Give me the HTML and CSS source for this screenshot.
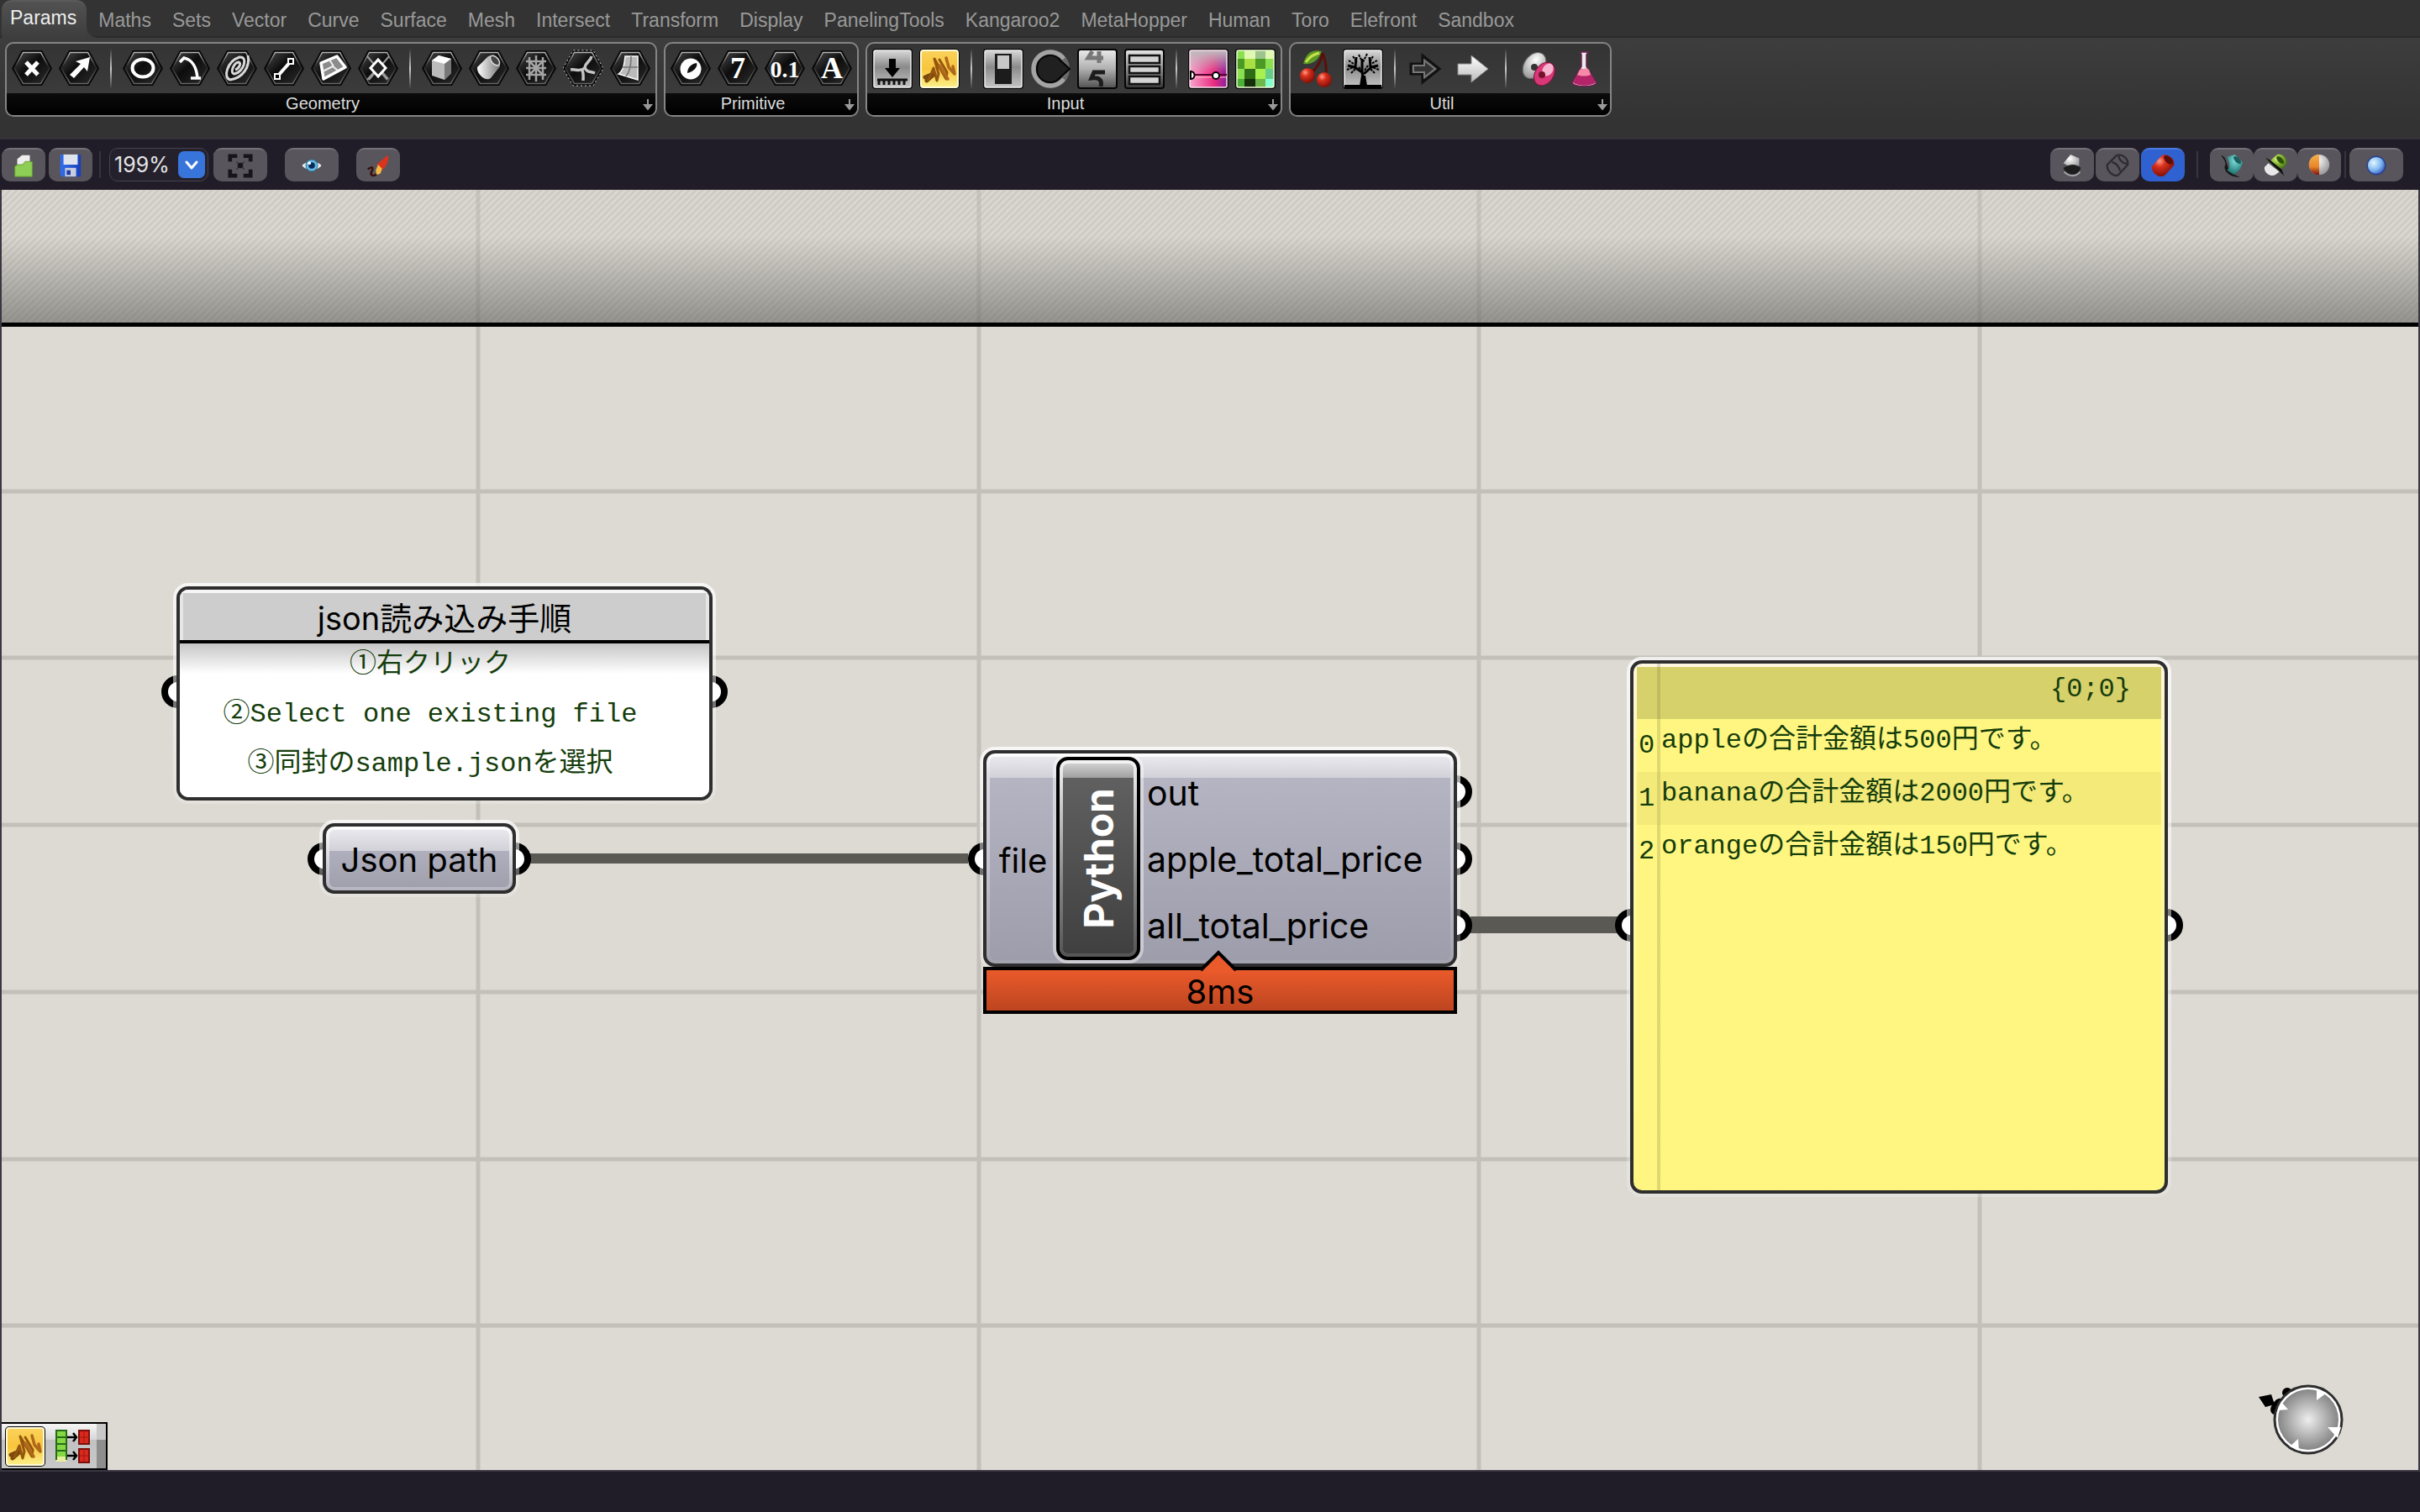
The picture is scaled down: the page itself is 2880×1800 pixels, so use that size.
FILE: index.html
```html
<!DOCTYPE html>
<html lang="ja">
<head>
    <meta charset="UTF-8">
    <meta name="viewport" content="width=device-width, initial-scale=1.0">
    <title>Grasshopper</title>
    <link rel="stylesheet" href="styles.css">
</head>
<body>

    <!-- shared shapes and gradients -->
    <svg class="defs" aria-hidden="true">
        <defs>
            <linearGradient id="gDark" x1="0" y1="0" x2="1" y2="1">
                <stop offset="0" stop-color="#4a4a4a"/><stop offset=".45" stop-color="#0c0c0c"/><stop offset="1" stop-color="#2c2c2c"/>
            </linearGradient>
            <linearGradient id="gEdge" x1="0" y1="0" x2="0" y2="1">
                <stop offset="0" stop-color="#b5b5b5"/><stop offset=".45" stop-color="#2a2a2a"/><stop offset="1" stop-color="#666"/>
            </linearGradient>
            <linearGradient id="gSteel" x1="0" y1="0" x2="0" y2="1">
                <stop offset="0" stop-color="#d8d8d8"/><stop offset=".45" stop-color="#8a8a8a"/><stop offset="1" stop-color="#c4c4c4"/>
            </linearGradient>
            <linearGradient id="gFade" x1="0" y1="0" x2="0" y2="1">
                <stop offset="0" stop-color="#e4e4e4"/><stop offset="1" stop-color="#3c3c3c"/>
            </linearGradient>
            <linearGradient id="gDrum" x1="0" y1="0" x2="0" y2="1">
                <stop offset="0" stop-color="#e8e8e8"/><stop offset=".5" stop-color="#b0b0b0"/><stop offset="1" stop-color="#555"/>
            </linearGradient>
            <linearGradient id="gGold" x1="0" y1="0" x2="0" y2="1">
                <stop offset="0" stop-color="#fbd25c"/><stop offset=".5" stop-color="#f8c53c"/><stop offset="1" stop-color="#fdf08a"/>
            </linearGradient>
            <linearGradient id="gPink" x1="0" y1="0" x2="1" y2="0">
                <stop offset="0" stop-color="#f7a3cc"/><stop offset=".65" stop-color="#ea2d80"/><stop offset="1" stop-color="#8a1f9c"/>
            </linearGradient>
            <linearGradient id="gGray" x1="0" y1="0" x2="0" y2="1">
                <stop offset="0" stop-color="#bdbdbd"/><stop offset="1" stop-color="#bdbdbd" stop-opacity="0"/>
            </linearGradient>
            <linearGradient id="gSolid" x1="0" y1="0" x2="1" y2="0">
                <stop offset="0" stop-color="#fff"/><stop offset="1" stop-color="#777"/>
            </linearGradient>
            <linearGradient id="gArrow" x1="0" y1="0" x2="0" y2="1">
                <stop offset="0" stop-color="#fff"/><stop offset="1" stop-color="#bbb"/>
            </linearGradient>
            <linearGradient id="gOrange" x1="0" y1="0" x2="0" y2="1">
                <stop offset="0" stop-color="#f5b04a"/><stop offset=".6" stop-color="#e8862a"/><stop offset="1" stop-color="#7c1008"/>
            </linearGradient>
            <linearGradient id="gDisk" x1="0" y1="0" x2="1" y2="0">
                <stop offset="0" stop-color="#2f6df0"/><stop offset="1" stop-color="#1a3fb8"/>
            </linearGradient>
            <radialGradient id="gRed" cx=".35" cy=".3" r=".75">
                <stop offset="0" stop-color="#ff9a86"/><stop offset=".35" stop-color="#d8301c"/><stop offset="1" stop-color="#7a0d06"/>
            </radialGradient>
            <radialGradient id="gTeal" cx=".5" cy=".3" r=".8">
                <stop offset="0" stop-color="#7fe0dc"/><stop offset=".6" stop-color="#36928f"/><stop offset="1" stop-color="#1a5554"/>
            </radialGradient>
            <radialGradient id="gGreen" cx=".4" cy=".3" r=".8">
                <stop offset="0" stop-color="#d6f07c"/><stop offset=".5" stop-color="#77a829"/><stop offset="1" stop-color="#31580a"/>
            </radialGradient>
            <radialGradient id="gBlue" cx=".35" cy=".35" r=".75">
                <stop offset="0" stop-color="#e4f6ff"/><stop offset=".55" stop-color="#80b8f0"/><stop offset="1" stop-color="#2a46b0"/>
            </radialGradient>
            <radialGradient id="gWhite" cx=".4" cy=".3" r=".8">
                <stop offset="0" stop-color="#fff"/><stop offset="1" stop-color="#8a8a8a"/>
            </radialGradient>
            <radialGradient id="gDial">
                <stop offset="0" stop-color="#eee"/><stop offset="1" stop-color="#868686"/>
            </radialGradient>
            <symbol id="hex" viewBox="0 0 48 48">
                <path d="M0 23.500 12 2h24l12 21.500L36 44H12z" fill="#060606"/>
                <path d="M3 23.500 13.500 4.500h21L45 23.500 34.500 41.500h-21z" fill="url(#gDark)" stroke="url(#gEdge)" stroke-width="1.500"/>
            </symbol>
            <symbol id="tile" viewBox="0 0 48 48">
                <rect x="0" y="0" width="48" height="48" rx="4" fill="#050505"/>
                <rect x="2" y="2" width="44" height="44" rx="2" fill="url(#gSteel)" stroke="#eee" stroke-width="1.500"/>
            </symbol>
            <symbol id="scribble" viewBox="0 0 48 48">
                <rect x="0" y="0" width="48" height="48" rx="5" fill="#050505"/>
                <rect x="2" y="2" width="44" height="44" rx="3" fill="url(#gGold)" stroke="#fffbd8" stroke-width="2"/>
                <path d="M7 34l7-3-5 7 9-8" fill="none" stroke="#7c4a0c" stroke-width="5" stroke-linecap="round" stroke-linejoin="round"/>
                <path d="M11 37l6-14 4 15 2-8-5-18 14 24 1-8-9-15" fill="none" stroke="#94560f" stroke-width="3" stroke-linecap="round" stroke-linejoin="round"/>
                <path d="M24 20l10 16M32 11l3 11 7 8-2-9" fill="none" stroke="#b0681c" stroke-width="3.500" stroke-linecap="round" stroke-linejoin="round"/>
            </symbol>
        </defs>
    </svg>

    <header class="ribbon">
        <nav class="tabs">
            <button class="tab active">Params</button>
            <button class="tab">Maths</button>
            <button class="tab">Sets</button>
            <button class="tab">Vector</button>
            <button class="tab">Curve</button>
            <button class="tab">Surface</button>
            <button class="tab">Mesh</button>
            <button class="tab">Intersect</button>
            <button class="tab">Transform</button>
            <button class="tab">Display</button>
            <button class="tab">PanelingTools</button>
            <button class="tab">Kangaroo2</button>
            <button class="tab">MetaHopper</button>
            <button class="tab">Human</button>
            <button class="tab">Toro</button>
            <button class="tab">Elefront</button>
            <button class="tab">Sandbox</button>
        </nav>

        <div class="groups">
            <section class="group">
                <div class="icons">
                    <button class="icon" aria-label="Point"><svg viewBox="0 0 48 48"><use href="#hex"/><path d="M17 16l14 15M31 16L17 31" stroke="#fff" stroke-width="5"/></svg></button>
                    <button class="icon" aria-label="Vector"><svg viewBox="0 0 48 48"><use href="#hex"/><path d="M13 31l13-13-6-3 17-5-3 17-4-5-12 13z" fill="#fff"/></svg></button>
                    <span class="sep"></span>
                    <button class="icon" aria-label="Circle"><svg viewBox="0 0 48 48"><use href="#hex"/><ellipse cx="24" cy="23" rx="12.500" ry="10.500" fill="none" stroke="#fff" stroke-width="4"/></svg></button>
                    <button class="icon" aria-label="Arc"><svg viewBox="0 0 48 48"><use href="#hex"/><path d="M12 16l5-5c10 2 15 12 16 24M25 35h12" fill="none" stroke="#fff" stroke-width="3.500"/></svg></button>
                    <button class="icon" aria-label="Curve"><svg viewBox="0 0 48 48"><use href="#hex"/><path d="M37 8c3 13-6 27-21 29-9-2-4-22 11-27 11-1 5 18-6 20-6-1-1-13 5-14 4 1 0 8-4 9" fill="none" stroke="#d8d8d8" stroke-width="3"/></svg></button>
                    <button class="icon" aria-label="Line"><svg viewBox="0 0 48 48"><use href="#hex"/><path d="M17 32L32 15" stroke="#fff" stroke-width="4"/><path d="M13 30h6v6h-6zM29 12h6v6h-6z" fill="#000" stroke="#fff" stroke-width="2"/></svg></button>
                    <button class="icon" aria-label="Plane"><svg viewBox="0 0 48 48"><use href="#hex"/><path d="M12 17l19-8 10 13-26 14z" fill="#8c8c8c" stroke="#fff" stroke-width="3.500" stroke-linejoin="round"/><path d="M14 27l12-6 6 5M22 13l5 8" fill="none" stroke="#eee" stroke-width="2"/></svg></button>
                    <button class="icon" aria-label="Rectangle"><svg viewBox="0 0 48 48"><use href="#hex"/><path d="M11 9l24 28M37 9L13 37M11 37l8-9M36 36l-7-8" stroke="#999" stroke-width="2"/><path d="M24 13l9 10-9 10-9-10z" fill="#222" stroke="#fff" stroke-width="3"/></svg></button>
                    <span class="sep"></span>
                    <button class="icon" aria-label="Box"><svg viewBox="0 0 48 48"><use href="#hex"/><path d="M12 14l8-6 15 4v17l-8 8-15-5z" fill="#bbb"/><path d="M12 14l8-6 15 4-8 6z" fill="#fff"/><path d="M27 18l8-6v17l-8 8z" fill="#777"/></svg></button>
                    <button class="icon" aria-label="Brep"><svg viewBox="0 0 48 48"><use href="#hex"/><path d="M10 22L23 9c6-3 15 5 14 12L26 35c-6 5-17-5-16-13z" fill="url(#gSolid)"/><ellipse cx="31" cy="14" rx="4" ry="7" transform="rotate(-42 31 14)" fill="#444" stroke="#ddd" stroke-width="1.500"/></svg></button>
                    <button class="icon" aria-label="Mesh"><svg viewBox="0 0 48 48"><use href="#hex"/><path d="M12 15h24M12 23h24M12 31h24M16 10v27M24 8v31M32 10v27M16 15l8 8 8-8M16 31l8-8 8 8" fill="none" stroke="#a4a4a4" stroke-width="2.500"/></svg></button>
                    <button class="icon" aria-label="SubD"><svg viewBox="0 0 48 48"><use href="#hex"/><path d="M0 23.500 12 2h24l12 21.500L36 44H12z" fill="none" stroke="#ccc" stroke-dasharray="2 3"/><path d="M34 9c-1 6-7 7-8 13 1 6 7 5 12 7M26 23c-6 5-10 1-17 2M22 24c3 4 2 9 2 14" fill="none" stroke="#c5c5c5" stroke-width="3.500"/></svg></button>
                    <button class="icon" aria-label="Surface"><svg viewBox="0 0 48 48"><use href="#hex"/><path d="M18 9h15v28l-23-7c6-4 7-12 8-21z" fill="#bbb" stroke="#fff" stroke-width="1.500"/><path d="M25 9c0 11-1 18-6 24M15 22h18" fill="none" stroke="#777" stroke-width="1.500"/></svg></button>
                </div>
                <div class="caption">Geometry<svg class="more" viewBox="0 0 14 16"><path d="M7 1v8M3 8h8l-4 5z" fill="#999" stroke="#999" stroke-width="2"/></svg></div>
            </section>

            <section class="group">
                <div class="icons">
                    <button class="icon" aria-label="Boolean"><svg viewBox="0 0 48 48"><use href="#hex"/><circle cx="24" cy="24" r="12.500" fill="#fff"/><path d="M20 29c0-7 5-11 11-12 2 4-4 11-11 12z" fill="#111"/></svg></button>
                    <button class="icon" aria-label="Integer"><svg viewBox="0 0 48 48"><use href="#hex"/><text x="24" y="35" class="glyph">7</text></svg></button>
                    <button class="icon" aria-label="Number"><svg viewBox="0 0 48 48"><use href="#hex"/><text x="24" y="34" class="glyph small">0.1</text></svg></button>
                    <button class="icon" aria-label="Text"><svg viewBox="0 0 48 48"><use href="#hex"/><text x="24" y="35" class="glyph">A</text></svg></button>
                </div>
                <div class="caption">Primitive<svg class="more" viewBox="0 0 14 16"><path d="M7 1v8M3 8h8l-4 5z" fill="#999" stroke="#999" stroke-width="2"/></svg></div>
            </section>

            <section class="group">
                <div class="icons">
                    <button class="icon" aria-label="Import"><svg viewBox="0 0 48 48"><use href="#tile"/><path d="M20 12h8v11h5l-9 11-9-11h5z"/><path d="M6 37h36M8 36v7M14 36v7M20 36v7M26 36v7M32 36v7M38 36v7" stroke="#111" stroke-width="3"/></svg></button>
                    <button class="icon" aria-label="Sketch"><svg viewBox="0 0 48 48"><use href="#scribble"/></svg></button>
                    <span class="sep"></span>
                    <button class="icon" aria-label="Toggle"><svg viewBox="0 0 48 48"><use href="#tile"/><rect x="14" y="6" width="20" height="36" fill="#1c1c1c"/><rect x="17" y="8" width="14" height="16" fill="#c9c9c9"/></svg></button>
                    <button class="icon" aria-label="Knob"><svg viewBox="0 0 48 48"><circle cx="24" cy="24" r="20" fill="none" stroke="#6a6a6a" stroke-width="6"/><path d="M40 12a20 20 0 1 0 0 24" fill="none" stroke="#a4a4a4" stroke-width="5"/><path d="M47 24l-11 10c-10 12-28 5-28-10S26 2 36 14z" fill="#202020" stroke="#050505" stroke-width="2"/></svg></button>
                    <button class="icon" aria-label="Digit scroller"><svg viewBox="0 0 48 48"><rect width="48" height="48" rx="4" fill="#050505"/><rect x="2" y="2" width="44" height="44" rx="2" fill="url(#gDrum)"/><path d="M18 3l-5 8h18M26 3v14" fill="none" stroke="#777" stroke-width="5"/><path d="M33 28H20l-3 7c9-1 13 2 11 10" fill="none" stroke="#1c1c1c" stroke-width="5"/></svg></button>
                    <button class="icon" aria-label="Value list"><svg viewBox="0 0 48 48"><rect width="48" height="48" rx="4" fill="#050505"/><rect x="2" y="2" width="44" height="44" rx="2" fill="url(#gFade)"/><path d="M6 8h36v9H6zM6 21h36v8H6zM6 33h36v9H6z" fill="#d4d4d4" stroke="#111" stroke-width="2.500"/></svg></button>
                    <span class="sep"></span>
                    <button class="icon" aria-label="Graph mapper"><svg viewBox="0 0 48 48"><rect width="48" height="48" rx="4" fill="#050505"/><rect x="2" y="2" width="44" height="44" rx="2" fill="url(#gPink)"/><rect x="2" y="2" width="44" height="26" rx="2" fill="url(#gGray)"/><rect x="2" y="2" width="44" height="44" rx="2" fill="none" stroke="#fbe0ee" stroke-width="1.500"/><path d="M3 31h43" stroke="#5a0030" stroke-width="2"/><path d="M3 34h43" stroke="#fbb" stroke-width="1"/><path d="M3 27a4 4 0 0 1 0 9z" fill="#fff" stroke="#000" stroke-width="2"/><circle cx="33" cy="32" r="4" fill="#fff" stroke="#000" stroke-width="2"/></svg></button>
                    <button class="icon" aria-label="Image sampler"><svg viewBox="0 0 48 48"><rect width="48" height="48" rx="4" fill="#050505"/><rect x="2" y="2" width="44" height="44" rx="2" fill="#8be052"/><path d="M2 12h9v12H2zM24 12h12v12H24z" fill="#4c9a26"/><path d="M11 2h13v10H11zM36 2h10v10H36z" fill="#e0f8b0"/><path d="M24 2h12v10H24z" fill="#9cc48c"/><path d="M11 12h13v12H11z" fill="#a8e044"/><path d="M11 24h13v12H11z" fill="#2e6c18"/><path d="M24 24h12v12H24z" fill="#a6f050"/><path d="M36 24h10v12H36z" fill="#66cc88"/><path d="M2 36h9v10H2z" fill="#4caf36"/><path d="M11 36h13v10H11z" fill="#17300c"/><path d="M24 36h12v10H24z" fill="#6cb848"/><path d="M36 36h10v10H36z" fill="#86ffd0"/><rect x="2" y="2" width="44" height="44" rx="2" fill="none" stroke="#efffd8" stroke-width="1.500"/></svg></button>
                </div>
                <div class="caption">Input<svg class="more" viewBox="0 0 14 16"><path d="M7 1v8M3 8h8l-4 5z" fill="#999" stroke="#999" stroke-width="2"/></svg></div>
            </section>

            <section class="group">
                <div class="icons">
                    <button class="icon" aria-label="Cherry picker"><svg viewBox="0 0 48 48"><path d="M32 5c-2 12-7 17-12 23M32 5c4 10 5 17 4 26" fill="none" stroke="#5a1008" stroke-width="3"/><path d="M9 18C12 5 20 0 31 3c-4 11-11 16-22 15z" fill="#5c9a24"/><path d="M12 16C17 9 21 7 28 5" stroke="#c8e04c" stroke-width="3" fill="none"/><circle cx="14" cy="32" r="9" fill="url(#gRed)"/><circle cx="34" cy="37" r="9" fill="url(#gRed)"/></svg></button>
                    <button class="icon" aria-label="Param viewer"><svg viewBox="0 0 48 48"><use href="#tile"/><path d="M2 43h44v4H2z"/><path d="M20 44l2-12h5l2 12z"/><path d="M24 34l-1-6-9-6M25 30l9-8M23 28V12M14 22l-8-2M15 22l1-12M34 22l8-2M33 22l-1-12" stroke="#000" stroke-width="3" fill="none"/><path d="M7 14l6 4M12 9l5 7M19 7l4 8M29 6l-5 10M36 9l-4 7M41 14l-7 4M5 25l8-3M43 25l-8-3M10 29l5-5M38 29l-5-5M19 22l4 4M30 20l-5 7" fill="none" stroke="#000" stroke-width="2" stroke-dasharray="3 1"/></svg></button>
                    <span class="sep"></span>
                    <button class="icon" aria-label="Relay input"><svg viewBox="0 0 48 48"><path d="M5 18h14V8l20 16-20 16V30H5z" fill="#444" stroke="#111" stroke-width="3"/><path d="M8 20h13v-6l13 10-13 10v-6H8z" fill="#333" stroke="#777" stroke-width="2"/></svg></button>
                    <button class="icon" aria-label="Relay output"><svg viewBox="0 0 48 48"><path d="M5 18h16V8l20 16-20 16V31H5z" fill="url(#gArrow)" stroke="#888" stroke-width="1"/></svg></button>
                    <span class="sep"></span>
                    <button class="icon" aria-label="Cluster"><svg viewBox="0 0 48 48"><ellipse cx="20" cy="20" rx="12" ry="17" transform="rotate(35 20 20)" fill="url(#gWhite)" stroke="#666"/><circle cx="20" cy="22" r="4" fill="#333"/><ellipse cx="32" cy="30" rx="11" ry="15" transform="rotate(35 32 30)" fill="#d83878" stroke="#7a1238"/><ellipse cx="36" cy="25" rx="6" ry="8" transform="rotate(35 36 25)" fill="#f6b4d0"/><circle cx="29" cy="31" r="4" fill="#74122c"/></svg></button>
                    <button class="icon" aria-label="Flask"><svg viewBox="0 0 48 48"><path d="M19 4h9l-2 3v14l12 20c-5 5-25 5-29 0l11-20V7z" fill="#ececec" stroke="#6e2050" stroke-width="1.500"/><path d="M19 24h9l9 16c-5 5-22 5-27 0z" fill="#b52468"/><path d="M18 25c4-2 8-2 11 0l2 6c-5 2-11 2-16 0z" fill="#f68aa8"/></svg></button>
                </div>
                <div class="caption">Util<svg class="more" viewBox="0 0 14 16"><path d="M7 1v8M3 8h8l-4 5z" fill="#999" stroke="#999" stroke-width="2"/></svg></div>
            </section>
        </div>
    </header>

    <div class="toolbar">
        <button class="tool" aria-label="Open"><svg viewBox="0 0 32 32"><path d="M8 8l6-5h10v13H8z" fill="#eee"/><path d="M5 30V17l4-2h6l3-4h9v19z" fill="#8fce56" stroke="#5f9c30"/></svg></button>
        <button class="tool" aria-label="Save"><svg viewBox="0 0 32 32"><path d="M3 2h26v28H5l-2-3z" fill="url(#gDisk)"/><path d="M7 2h18v13H7z" fill="#dfe3ec"/><path d="M9 19h14v11H9z" fill="#c9cede"/><path d="M11 22h5v6h-5z" fill="#1c3fae"/></svg></button>
        <span class="divider"></span>
        <label class="zoom">
            <select aria-label="Zoom"><option>199%</option></select>
            <span class="arrow"><svg viewBox="0 0 32 32"><path d="M10 13l6 7 6-7" fill="none" stroke="#fff" stroke-width="3" stroke-linecap="round" stroke-linejoin="round"/></svg></span>
        </label>
        <button class="tool wide extents" aria-label="Zoom extents"><svg viewBox="0 0 32 32"><path d="M3 11V4h9M20 4h9v7M29 21v8h-9M12 29H3v-8" fill="none" stroke="#161519" stroke-width="5"/><path d="M11 11l10 10M21 11L11 21" stroke="#3d3b41" stroke-width="2"/><circle cx="16" cy="16" r="3.500" fill="#161519"/></svg></button>
        <button class="tool wide gap" aria-label="Preview"><svg viewBox="0 0 32 32"><path d="M3 16C8 9 24 9 29 16 24 24 8 24 3 16z" fill="#e8e8e8" stroke="#444"/><circle cx="16" cy="16" r="7.500" fill="#62b8e0" stroke="#2f6c90"/><circle cx="16" cy="16" r="4" fill="#082a5c"/><circle cx="13" cy="13" r="2" fill="#fff"/></svg></button>
        <button class="tool gap" aria-label="Sketch"><svg viewBox="0 0 32 32"><path d="M14 15L28 3c3 5-2 16-8 20z" fill="#d8341c"/><path d="M13 22l3-7 5 5-2 6-5 2z" fill="#f2bb45"/><path d="M14 27c-5 4-9 1-6-4s-1-6-5-2" fill="none" stroke="#3b0d08" stroke-width="2.500"/></svg></button>

        <span class="spacer"></span>

        <div class="set">
            <button class="tool" aria-label="No preview"><svg viewBox="0 0 32 32"><path d="M5 13l9-11 11 5v9l-8 4z" fill="url(#gWhite)"/><path d="M5 19c2 9 19 13 22 0-7-6-14-5-22 0z" fill="#1d1d1d"/><path d="M6 24c5 6 15 7 20 0" fill="none" stroke="#aaa" stroke-width="2"/></svg></button>
            <button class="tool" aria-label="Wireframe"><svg viewBox="0 0 32 32"><path d="M3 15L15 3c7-2 15 4 14 12L17 28C11 31 2 23 3 15zM9 12c4 0 10 6 10 11M18 4c-1 4 6 11 10 9" fill="none" stroke="#2f2d33" stroke-width="2.500"/></svg></button>
            <button class="tool selected" aria-label="Shaded"><svg viewBox="0 0 32 32"><path d="M2 17L15 3c8-3 17 5 15 13L19 28C12 34 1 25 2 17z" fill="url(#gRed)"/><ellipse cx="23" cy="9" rx="4" ry="7" transform="rotate(-45 23 9)" fill="#5c0d08"/></svg></button>
        </div>
        <span class="divider"></span>
        <div class="set tight">
            <button class="tool" aria-label="Selected preview"><svg viewBox="0 0 32 32"><path d="M2 3c12 4 2 19 24 28C12 31 4 21 8 15c0-5-3-8-6-12z" fill="#18181a"/><path d="M10 5l10-3 10 10-3 8-8 8-9-6c5-5 3-9 0-17z" fill="url(#gTeal)"/><ellipse cx="23" cy="9" rx="3" ry="6" transform="rotate(-45 23 9)" fill="#1c5e5e"/></svg></button>
            <button class="tool" aria-label="Preview filter"><svg viewBox="0 0 32 32"><path d="M9 10l9-8c7-2 14 6 12 12l-7 8z" fill="url(#gGreen)"/><ellipse cx="22" cy="9" rx="3" ry="6" transform="rotate(-45 22 9)" fill="#2d5008"/><path d="M3 6l24 23-3-8L9 9z" fill="#101010"/><path d="M7 13l-5 5c-1 8 10 14 15 9l4-3z" fill="#e8e8e8"/></svg></button>
            <button class="tool" aria-label="Preview quality"><svg viewBox="0 0 32 32"><circle cx="16" cy="15" r="13" fill="url(#gWhite)"/><path d="M16 2a13 13 0 0 0 0 26z" fill="url(#gOrange)"/></svg></button>
        </div>
        <span class="divider slim"></span>
        <button class="tool wide" aria-label="Sphere"><svg viewBox="0 0 32 32"><circle cx="16" cy="16" r="11.500" fill="url(#gBlue)" stroke="#26408f" stroke-width="1.500"/></svg></button>
    </div>

    <main class="canvas">
        <svg class="grid" width="100%" height="100%">
            <path d="M567 0V1524M1163 0V1524M1758 0V1524M2354 0V1524M0 359H2880M0 557H2880M0 756H2880M0 955H2880M0 1154H2880M0 1352H2880"/>
        </svg>
        <div class="edge"></div>
        <svg class="wires" width="100%" height="100%">
            <path d="M628 796H1150" stroke-width="12"/>
            <path d="M1748 875H1924" stroke-width="20"/>
        </svg>

        <article class="node note">
            <span class="grip left"></span>
            <span class="grip right"></span>
            <div class="glow"></div>
            <div class="face">
                <h2>json読み込み手順</h2>
                <div class="steps">
                    <p>①右クリック</p>
                    <p>②Select one existing file</p>
                    <p>③同封のsample.jsonを選択</p>
                </div>
            </div>
        </article>

        <article class="node param">
            <span class="grip left"></span>
            <span class="grip right"></span>
            <div class="glow"></div>
            <div class="face">Json path</div>
        </article>

        <article class="node python">
            <span class="grip left"></span>
            <span class="grip right first"></span>
            <span class="grip right"></span>
            <span class="grip right last"></span>
            <div class="glow"></div>
            <div class="face">
                <div class="inputs">file</div>
                <div class="core"><span>Python</span></div>
                <ul class="outputs">
                    <li>out</li>
                    <li>apple_total_price</li>
                    <li>all_total_price</li>
                </ul>
            </div>
            <div class="profiler">
                <svg viewBox="0 0 48 28"><path d="M2 28h44L24 4z" fill="#eb5a2b"/><path d="M3 25L24 4l21 21" fill="none" stroke="#000" stroke-width="4"/></svg>
                8ms
            </div>
        </article>

        <article class="node result">
            <span class="grip left"></span>
            <span class="grip right"></span>
            <div class="glow"></div>
            <div class="face">
                <div class="path">{0;0}</div>
                <div class="row"><span>0</span>appleの合計金額は500円です。</div>
                <div class="row"><span>1</span>bananaの合計金額は2000円です。</div>
                <div class="row"><span>2</span>orangeの合計金額は150円です。</div>
            </div>
        </article>

        <div class="widgets">
            <button aria-label="Sketch widget"><svg viewBox="0 0 48 48"><use href="#scribble"/></svg></button>
            <button aria-label="Align widget"><svg viewBox="0 0 48 48"><path d="M5 5h12v36H5z" fill="#86d842"/><path d="M5 36h12v6H5z" fill="#e8f0a0"/><path d="M5 40V5h12v35M5 13h12M5 21h12M5 29h12" fill="none" stroke="#256b18" stroke-width="2"/><path d="M18 13h11M25 8l4 5-4 5M18 35h11M25 30l4 5-4 5" fill="none" stroke="#000" stroke-width="2.500"/><path d="M32 5h12v16H32zM32 27h12v16H32z" fill="#d8291c" stroke="#7a0f0a" stroke-width="2"/><path d="M32 13h12M38 5v16M32 35h12M38 27v16" stroke="#a01810"/></svg></button>
        </div>

        <svg class="compass" viewBox="0 0 106 88">
            <path d="M3 16l15-3 4 12-11 3z"/>
            <path d="M20 24c4-7 10-8 12-4L21 37c-5-2-5-8-1-13z"/>
            <circle cx="37" cy="11" r="6"/>
            <circle cx="62" cy="43" r="40" fill="#fff" stroke="#2e2e2e" stroke-width="3"/>
            <circle cx="62" cy="43" r="36" fill="url(#gDial)"/>
            <path d="M72 6l11 6-11 8zM101 52l-4 13-12-13zM51 80l-11-5 10-9zM26 32l5-9 7 8z" fill="#fff"/>
        </svg>
    </main>

    <footer class="status"></footer>

</body>
</html>
```
FILE: styles.css
```css
* {
    box-sizing: border-box;
}
body {
    margin: 0;
    height: 100vh;
    display: flex;
    flex-direction: column;
    background-color: #211d28;
    font-family: "Liberation Sans", Arial, sans-serif;
    overflow: hidden;
}
button {
    border: none;
    background: none;
    padding: 0;
    font: inherit;
    color: inherit;
}
svg {
    display: block;
}
.defs {
    position: absolute;
    width: 0;
    height: 0;
}

/* Ribbon */
.ribbon {
    background: #333;
    height: 166px;
    border-bottom: 2px solid #35323d;
}
.tabs {
    display: flex;
    align-items: flex-start;
    height: 45px;
    padding-left: 2px;
    gap: 25px;
    border-bottom: 2px solid #292929;
    font-size: 23px;
    color: #999;
}
.tab {
    height: 43px;
    padding-top: 4px;
    line-height: 40px;
}
.tab.active {
    position: relative;
    padding: 0 12px 6px 10px;
    margin-right: -11px;
    height: 45px;
    line-height: 36px;
    border-radius: 12px 12px 0 0;
    border-top: 2px solid #5a5a5a;
    background: linear-gradient(#525252, #3d3d3d);
    color: #eee;
}
.tab.active::after {
    content: "";
    position: absolute;
    right: -12px;
    bottom: 0;
    width: 12px;
    height: 12px;
    background: radial-gradient(circle at 100% 0, transparent 11px, #3d3d3d 12px);
}
.groups {
    display: flex;
    gap: 8px;
    padding: 5px 6px;
    background: linear-gradient(#3d3d3d, #333);
}
.group {
    border: 2px solid #858585;
    border-radius: 10px;
    overflow: hidden;
    background: linear-gradient(#343434, #3e3e3e);
}
.icons {
    display: flex;
    padding: 6px 2px 5px;
}
.icon {
    width: 56px;
    height: 48px;
    padding: 0 4px;
}
.icon svg {
    width: 48px;
    height: 48px;
}
.sep {
    width: 20px;
    background: linear-gradient(transparent, #ccc, transparent) center / 2px 100% no-repeat;
}
.glyph {
    font-family: "Liberation Serif", serif;
    font-size: 36px;
    font-weight: bold;
    text-anchor: middle;
    fill: #fff;
}
.glyph.small {
    font-size: 28px;
}
.caption {
    position: relative;
    height: 26px;
    padding-right: 20px;
    line-height: 25px;
    text-align: center;
    font-size: 20px;
    color: #ddd;
    background: linear-gradient(#0b0b0b, #000);
}
.more {
    position: absolute;
    right: 2px;
    bottom: 4px;
    width: 14px;
    height: 16px;
}

/* Canvas toolbar */
.toolbar {
    display: flex;
    align-items: center;
    height: 60px;
    padding: 0 20px 0 2px;
    gap: 4px;
}
.tool {
    width: 52px;
    height: 40px;
    display: flex;
    align-items: center;
    justify-content: center;
    border-radius: 10px;
    border-top: 2px solid #75727a;
    background: #58555d;
}
.tool.wide {
    width: 64px;
}
.tool.extents {
    margin-left: 2px;
}
.tool.gap {
    margin-left: 17px;
}
.tool.selected {
    background: #2f62d0;
    border-top-color: #4a7be0;
}
.tool svg {
    width: 30px;
    height: 30px;
}
.divider {
    width: 2px;
    height: 32px;
    margin: 0 6px 0 4px;
    background: #38343f;
}
.zoom {
    position: relative;
    width: 118px;
    height: 40px;
    border-radius: 10px;
    border: 1px solid #45424c;
    background: #25212c;
}
.zoom select {
    appearance: none;
    width: 100%;
    height: 38px;
    padding: 0 0 0 5px;
    border: none;
    background: none;
    color: #e6e6e8;
    font-family: Inter, sans-serif;
    font-size: 25px;
}
.arrow {
    position: absolute;
    right: 3px;
    top: 3px;
    width: 32px;
    height: 32px;
    border-radius: 7px;
    background: #3875da;
    pointer-events: none;
}
.spacer {
    flex: 1;
}
.set {
    display: flex;
    gap: 2px;
}
.set.tight {
    gap: 0;
}
.set + .divider {
    margin: 0 10px;
}
.set + .divider.slim {
    margin: 0;
}

/* Canvas */
.canvas {
    flex: 1;
    position: relative;
    overflow: hidden;
    background: #dddad4;
    border-left: 2px solid #3a3743;
    border-right: 2px solid #3a3743;
}
.grid, .wires {
    position: absolute;
    left: 0;
    top: 0;
}
.grid path {
    fill: none;
    stroke: #c3c0ba;
    stroke-width: 5;
}
.wires path {
    stroke: #5a5954;
}
.edge {
    position: absolute;
    left: 0;
    right: 0;
    top: 0;
    height: 163px;
    border-bottom: 5px solid #000;
    background:
        linear-gradient(rgba(80, 80, 76, 0) 35%, rgba(80, 80, 76, 0.5)),
        linear-gradient(135deg, rgba(190, 188, 180, 0.5) 25%, rgba(210, 208, 200, 0.3) 25%, rgba(210, 208, 200, 0.3) 50%, rgba(190, 188, 180, 0.5) 50%, rgba(190, 188, 180, 0.5) 75%, rgba(210, 208, 200, 0.3) 75%) 0 0 / 8px 8px;
}

/* Nodes */
.node {
    position: absolute;
    font-family: Inter, "Noto Sans CJK JP", sans-serif;
    font-size: 40px;
    color: #000;
}
.glow {
    position: absolute;
    inset: -4px;
    border-radius: 18px;
    background: linear-gradient(rgba(255, 255, 255, 0.75), rgba(255, 255, 255, 0.2));
}
.face {
    position: relative;
    border: 4px solid #2e2e2e;
    border-radius: 14px;
}
.grip {
    position: absolute;
    top: 50%;
    width: 39px;
    height: 39px;
    margin-top: -19px;
    border: 8px solid #000;
    border-radius: 50%;
    background: #fff;
}
.grip.left {
    left: -18px;
}
.grip.right {
    right: -18px;
}
.note .grip, .result .grip {
    margin-top: -22px;
}

.note {
    left: 208px;
    top: 472px;
    width: 638px;
}
.note .face {
    background: #fff;
    overflow: hidden;
}
.note h2 {
    margin: 0;
    height: 64px;
    padding-top: 4px;
    line-height: 60px;
    border-bottom: 4px solid #000;
    text-align: center;
    font-size: 38px;
    font-weight: normal;
    background: #cdcdcd;
    box-shadow: inset 0 4px 0 #f6f6f6, inset 4px 0 0 #e6e6e6, inset -4px 0 0 #e6e6e6;
}
.steps {
    display: flex;
    flex-direction: column;
    gap: 15px;
    height: 183px;
    padding: 4px 34px 0 0;
    background: linear-gradient(#c6c6c6, #fff 36px);
    text-align: center;
}
.steps p, .result {
    font-family: "Liberation Mono", "Noto Sans CJK JP", monospace;
    font-size: 32px;
    color: #153d0c;
}
.steps p {
    margin: 0;
    line-height: 44px;
}

.param {
    left: 382px;
    top: 754px;
    width: 230px;
}
.param .face {
    height: 84px;
    padding: 4px;
    line-height: 72px;
    text-align: center;
    white-space: nowrap;
    background:
        linear-gradient(#e9e8ed, #d2d1d9 25px, #b0afbd 25px, #a09fac) content-box,
        linear-gradient(#fff, #b5b4c0) padding-box;
}

.python {
    left: 1168px;
    top: 667px;
    width: 564px;
}
.python .face {
    display: flex;
    height: 258px;
    padding: 4px;
    background:
        linear-gradient(#e9e8ed, #d2d1d9 25px, #b5b4c2 25px, #9e9dab) content-box,
        linear-gradient(#fff, #dddce3 25px, #c5c4d0, #a3a2af) padding-box;
}
.python .glow {
    bottom: 52px;
}
.python .grip.left, .python .grip.right {
    top: 129px;
}
.python .grip.first {
    top: 49px;
}
.python .grip.last {
    top: 208px;
}
.inputs {
    width: 79px;
    padding-top: 4px;
    display: flex;
    align-items: center;
    justify-content: center;
}
.core {
    width: 100px;
    padding: 4px;
    display: flex;
    align-items: center;
    justify-content: center;
    border: 4px solid #000;
    border-radius: 14px;
    box-shadow: 0 0 0 4px rgba(255, 255, 255, 0.45);
    background:
        linear-gradient(#cfcfcf, #a0a0a0 17px, #606060 17px, #404040) content-box,
        linear-gradient(#f4f4f4, #8a8a8a 60%, #555) padding-box;
}
.core span {
    writing-mode: vertical-rl;
    rotate: 180deg;
    font-size: 48px;
    font-weight: bold;
    color: #fff;
}
.outputs {
    flex: 1;
    margin: 0;
    padding: 4px 0 1px 8px;
    list-style: none;
    font-size: 41px;
}
.outputs li {
    height: 79px;
    line-height: 79px;
}
.profiler {
    position: relative;
    height: 56px;
    line-height: 52px;
    text-align: center;
    border: 4px solid #000;
    background: linear-gradient(#ea5a2b, #bd4520);
}
.profiler svg {
    position: absolute;
    left: 50%;
    top: -25px;
    width: 48px;
    height: 28px;
    margin-left: -26px;
}

.result {
    left: 1938px;
    top: 560px;
    width: 640px;
}
.result .face {
    height: 635px;
    padding: 4px;
    border-radius: 14px;
    background:
        linear-gradient(rgba(0, 0, 0, 0.12), rgba(0, 0, 0, 0.12)) 28px 0 / 4px 100% no-repeat,
        linear-gradient(#fef681, #fef681) content-box,
        linear-gradient(#fff6e0, #fdf9a8 25%, #fef681) padding-box;
}
.path {
    height: 62px;
    padding-right: 36px;
    line-height: 54px;
    text-align: right;
    background: linear-gradient(90deg, #d7d16c 24px, #c0bb60 24px, #c0bb60 28px, #d7d16c 28px);
}
.row {
    display: flex;
    height: 63px;
    line-height: 51px;
    white-space: nowrap;
}
.row:nth-child(odd) {
    background: rgba(200, 190, 90, 0.2);
}
.row:last-child {
    background: none;
}
.row span {
    width: 29px;
    padding: 6px 0 0 2px;
}

/* Corner widgets */
.widgets {
    position: absolute;
    left: 0;
    bottom: 0;
    display: flex;
    gap: 8px;
    width: 126px;
    height: 57px;
    padding: 3px 4px;
    border: 2px solid #000;
    border-left: none;
    background:
        linear-gradient(#c8c8c8 35%, #8e8e8e 35%) right / 11px 100% no-repeat,
        linear-gradient(#f6f6f6 0, #d8d8d8 35%, #c2c2c2 35%, #c8c8c8);
}
.widgets svg {
    width: 48px;
    height: 48px;
}
.compass {
    position: absolute;
    right: 87px;
    bottom: 15px;
    width: 106px;
    height: 88px;
}
.status {
    height: 50px;
    border-top: 2px solid #3a3743;
}
```
